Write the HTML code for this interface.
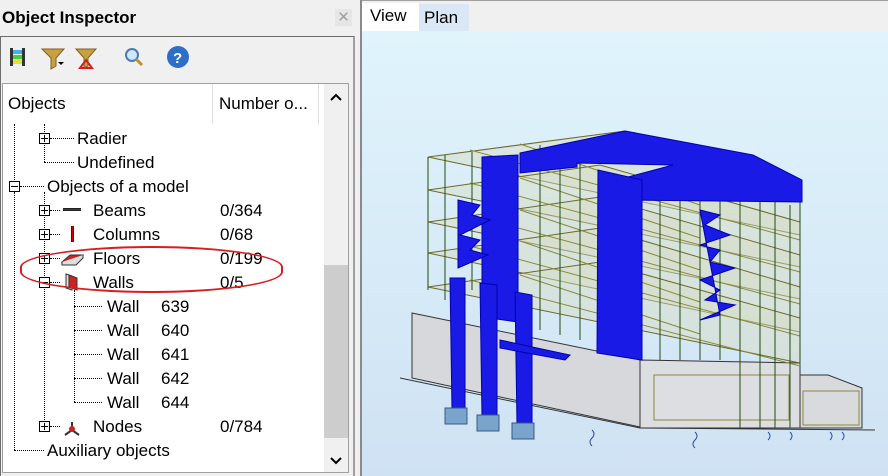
<!DOCTYPE html>
<html><head><meta charset="utf-8"><style>
*{margin:0;padding:0;box-sizing:border-box}
body{width:888px;height:476px;overflow:hidden;background:#f0f0f0;font-family:"Liberation Sans",Arial,sans-serif;position:relative}
.a{position:absolute}
.t{position:absolute;font-size:17px;color:#000;white-space:nowrap;line-height:18px}
.box{position:absolute;width:11px;height:11px;border:1px solid #000;background:#fff}
.box::before{content:"";position:absolute;left:1px;top:4px;width:7px;height:1px;background:#000}
.plus::after{content:"";position:absolute;left:4px;top:1px;width:1px;height:7px;background:#000}
.hd{position:absolute;border-top:1px dotted #000;height:0}
.vd{position:absolute;border-left:1px dotted #000;width:0}
</style></head><body>
<div class="t" style="left:2px;top:9px;font-weight:bold;font-size:17px">Object Inspector</div>
<div class="a" style="left:335px;top:9px;width:17px;height:17px;background:#e6e6e6;color:#a0a0a0;font-size:15px;text-align:center;line-height:17px">✕</div>
<div class="a" style="left:0;top:36px;width:355px;height:440px;border:1px solid #6e6e6e;border-right:2px solid #a0a0a0;border-bottom:none"></div>
<svg class="a" style="left:8px;top:44px" width="210" height="28">
<rect x="2" y="4" width="3" height="18" fill="#333"/><rect x="14" y="4" width="3" height="18" fill="#333"/>
<rect x="5" y="6" width="9" height="4" fill="#3cb0f0"/><rect x="5" y="11" width="9" height="4" fill="#40d040"/><rect x="5" y="16" width="9" height="4" fill="#e0e040"/>
<path d="M34 5h22l-8 9v8l-5 3v-11z" fill="#c8a040" stroke="#806020"/><path d="M50 18l3 3 3-3z" fill="#000"/>
<path d="M68 5h20l-8 9v8l-4 2v-10z" fill="#c8a040" stroke="#806020"/><path d="M72 24l6-8 6 8z" fill="none" stroke="#d02020" stroke-width="2"/>
<circle cx="124" cy="11" r="6" fill="#cde8ff" stroke="#4a7ab0" stroke-width="2"/><path d="M128 15l6 6" stroke="#c09030" stroke-width="3"/>
<circle cx="170" cy="13" r="11" fill="#2d6fc8"/><text x="165" y="19" font-size="15" font-weight="bold" fill="#fff" font-family="Liberation Sans">?</text>
</svg>
<div class="a" style="left:2px;top:83px;width:347px;height:390px;background:#fff;border:1px solid #a0a0a0"></div>
<div class="a" style="left:212px;top:84px;width:1px;height:40px;background:#e0e0e0"></div>
<div class="a" style="left:318px;top:84px;width:1px;height:40px;background:#e0e0e0"></div>
<div class="t" style="left:8px;top:95px">Objects</div>
<div class="t" style="left:219px;top:95px">Number o...</div>
<div class="a" style="left:324px;top:84px;width:24px;height:388px;background:#f0f0f0"></div>
<div class="a" style="left:324px;top:265px;width:24px;height:173px;background:#cdcdcd"></div>
<svg class="a" style="left:324px;top:84px" width="24" height="388">
<path d="M7 16l5-5 5 5" stroke="#000" stroke-width="2" fill="none"/>
<path d="M7 374l5 5 5-5" stroke="#000" stroke-width="2" fill="none"/>
</svg>
<div class="vd" style="left:44px;top:124px;height:38px"></div>
<div class="hd" style="left:50px;top:138px;width:24px"></div>
<div class="hd" style="left:44px;top:162px;width:30px"></div>
<div class="vd" style="left:14px;top:124px;height:58px"></div>
<div class="vd" style="left:14px;top:192px;height:258px"></div>
<div class="hd" style="left:20px;top:186px;width:24px"></div>
<div class="hd" style="left:14px;top:450px;width:30px"></div>
<div class="vd" style="left:44px;top:192px;height:228px"></div>
<div class="hd" style="left:50px;top:210px;width:10px"></div>
<div class="hd" style="left:50px;top:234px;width:10px"></div>
<div class="hd" style="left:50px;top:258px;width:10px"></div>
<div class="hd" style="left:50px;top:282px;width:10px"></div>
<div class="hd" style="left:50px;top:426px;width:10px"></div>
<div class="vd" style="left:74px;top:290px;height:112px"></div>
<div class="hd" style="left:74px;top:306px;width:28px"></div>
<div class="hd" style="left:74px;top:330px;width:28px"></div>
<div class="hd" style="left:74px;top:354px;width:28px"></div>
<div class="hd" style="left:74px;top:378px;width:28px"></div>
<div class="hd" style="left:74px;top:402px;width:28px"></div>
<div class="box plus" style="left:39px;top:133px"></div>
<div class="box" style="left:9px;top:181px"></div>
<div class="box plus" style="left:39px;top:205px"></div>
<div class="box plus" style="left:39px;top:229px"></div>
<div class="box plus" style="left:39px;top:253px"></div>
<div class="box" style="left:39px;top:277px"></div>
<div class="box plus" style="left:39px;top:421px"></div>
<svg class="a" style="left:60px;top:200px" width="26" height="236">
<rect x="3" y="8" width="18" height="3" fill="#222"/><rect x="3" y="9" width="18" height="1" fill="#c00"/>
<rect x="11" y="26" width="3" height="16" fill="#222"/><rect x="12" y="26" width="1" height="16" fill="#c00"/>
<path d="M2 62l8-7h13l-7 7z" fill="#d02020" stroke="#333"/><path d="M2 62v3h14l7-7v-3" fill="#ddd" stroke="#333"/>
<path d="M6 74l6 2v14l-6-2z" fill="#ddd" stroke="#333"/><path d="M9 75l8 3v12l-8-3z" fill="#d02020" stroke="#333"/>
<path d="M12 222v8M12 230l-7 5M12 230l7 5" stroke="#333" stroke-width="2"/><circle cx="12" cy="229" r="3" fill="#d02020"/>
</svg>
<div class="t" style="left:77px;top:130px">Radier</div>
<div class="t" style="left:77px;top:154px">Undefined</div>
<div class="t" style="left:47px;top:178px">Objects of a model</div>
<div class="t" style="left:93px;top:202px">Beams</div><div class="t" style="left:220px;top:202px">0/364</div>
<div class="t" style="left:93px;top:226px">Columns</div><div class="t" style="left:220px;top:226px">0/68</div>
<div class="t" style="left:93px;top:250px">Floors</div><div class="t" style="left:220px;top:250px">0/199</div>
<div class="t" style="left:93px;top:274px">Walls</div><div class="t" style="left:220px;top:274px">0/5</div>
<div class="t" style="left:107px;top:298px">Wall</div><div class="t" style="left:161px;top:298px">639</div>
<div class="t" style="left:107px;top:322px">Wall</div><div class="t" style="left:161px;top:322px">640</div>
<div class="t" style="left:107px;top:346px">Wall</div><div class="t" style="left:161px;top:346px">641</div>
<div class="t" style="left:107px;top:370px">Wall</div><div class="t" style="left:161px;top:370px">642</div>
<div class="t" style="left:107px;top:394px">Wall</div><div class="t" style="left:161px;top:394px">644</div>
<div class="t" style="left:93px;top:418px">Nodes</div><div class="t" style="left:220px;top:418px">0/784</div>
<div class="t" style="left:47px;top:442px">Auxiliary objects</div>
<div class="a" style="left:20px;top:246px;width:263px;height:47px;border:2px solid #d42020;border-radius:50%/45%"></div>
<div class="a" style="left:360px;top:0;width:2px;height:476px;background:#8a8a8a"></div>
<div class="a" style="left:362px;top:0;width:526px;height:31px;background:#f0f0f0;border-top:1px solid #a0a0a0"></div>
<div class="a" style="left:362px;top:3px;width:57px;height:28px;background:#fff"></div>
<div class="a" style="left:419px;top:4px;width:50px;height:27px;background:#dae8f6"></div>
<div class="t" style="left:370px;top:7px">View</div>
<div class="t" style="left:424px;top:9px">Plan</div>
<div class="a" style="left:362px;top:31px;width:526px;height:445px;background:linear-gradient(#e0f4fc,#cfe2f3)"></div>
<svg class="a" style="left:0;top:0" width="888" height="476">
<g stroke-width="1">
<path d="M400 378L640 428L875 430" stroke="#333" fill="none"/>
<polygon points="412,313 640,360 640,427 412,378" fill="#d6d8dc" stroke="#333"/>
<polygon points="640,360 800,363 800,428 640,428" fill="#dcdee2" stroke="#333"/>
<rect x="654" y="375" width="135" height="45" fill="none" stroke="#8a8a3a"/>
<polygon points="800,375 828,375 862,388 862,428 800,428" fill="#d8dade" stroke="#333"/>
<rect x="803" y="391" width="56" height="34" fill="none" stroke="#8a8a3a"/>
<g fill="rgba(215,220,190,0.45)" stroke="#6b6a2a">
<polygon points="428,157 625,131 800,190 800,235"/>
<polygon points="428,190 600,165 800,222 800,267"/>
<polygon points="428,222 600,197 800,255 800,299"/>
<polygon points="428,253 600,228 800,287 800,332"/>
<polygon points="428,287 600,262 800,318 800,363"/>
</g>
<g stroke="#8a8a3a" fill="none">
<path d="M470 150L800 240M470 183L800 272M470 215L800 304M470 246L800 336M470 280L800 366"/>
<path d="M520 144L700 205M520 178L700 238M520 210L700 270M520 241L700 302M520 275L700 334"/>
</g>
<g stroke="#234a10">
<path d="M428 157V290M445 155V300M472 152V290M540 145V330M560 145V335M580 150V340M660 170V360M680 175V360M700 180V360M720 185V360M740 190V428M760 195V428M775 200V428M790 205V428M800 180V363"/>
</g>
<g fill="#1a1ae6" stroke="#0000b0">
<polygon points="482,157 518,155 518,322 482,317"/>
<polygon points="520,153 625,131 753,155 802,180 802,202 628,200 628,177 673,165 577,163 577,167 520,173"/>
<polygon points="598,170 642,180 642,360 597,353"/>
<polygon points="450,278 465,278 465,410 452,410"/>
<polygon points="480,283 497,285 497,417 482,417"/>
<polygon points="515,292 532,295 532,425 517,425"/>
<polygon points="700,210 720,215 705,225 730,235 700,245 720,250 710,262 735,268 700,280 720,290 705,300 735,305 700,320 720,315"/>
<polygon points="458,200 480,205 472,215 490,220 460,235 480,240 470,250 488,255 458,268"/>
<polygon points="500,340 570,355 565,360 500,348"/>
</g>
<g fill="#7aa4cc" stroke="#3a5a80">
<rect x="445" y="408" width="22" height="16"/><rect x="477" y="415" width="22" height="16"/><rect x="512" y="423" width="22" height="16"/>
</g>
<g stroke="#2a4a9a" fill="none"><path d="M592 430q4 4 0 8q-4 4 0 8M695 432q4 4 0 8q-4 4 0 8M790 432q4 4 0 8M830 432q4 4 0 8M842 432q4 4 0 8M768 432q4 4 0 8"/></g>
</g>
</svg>
</body></html>
